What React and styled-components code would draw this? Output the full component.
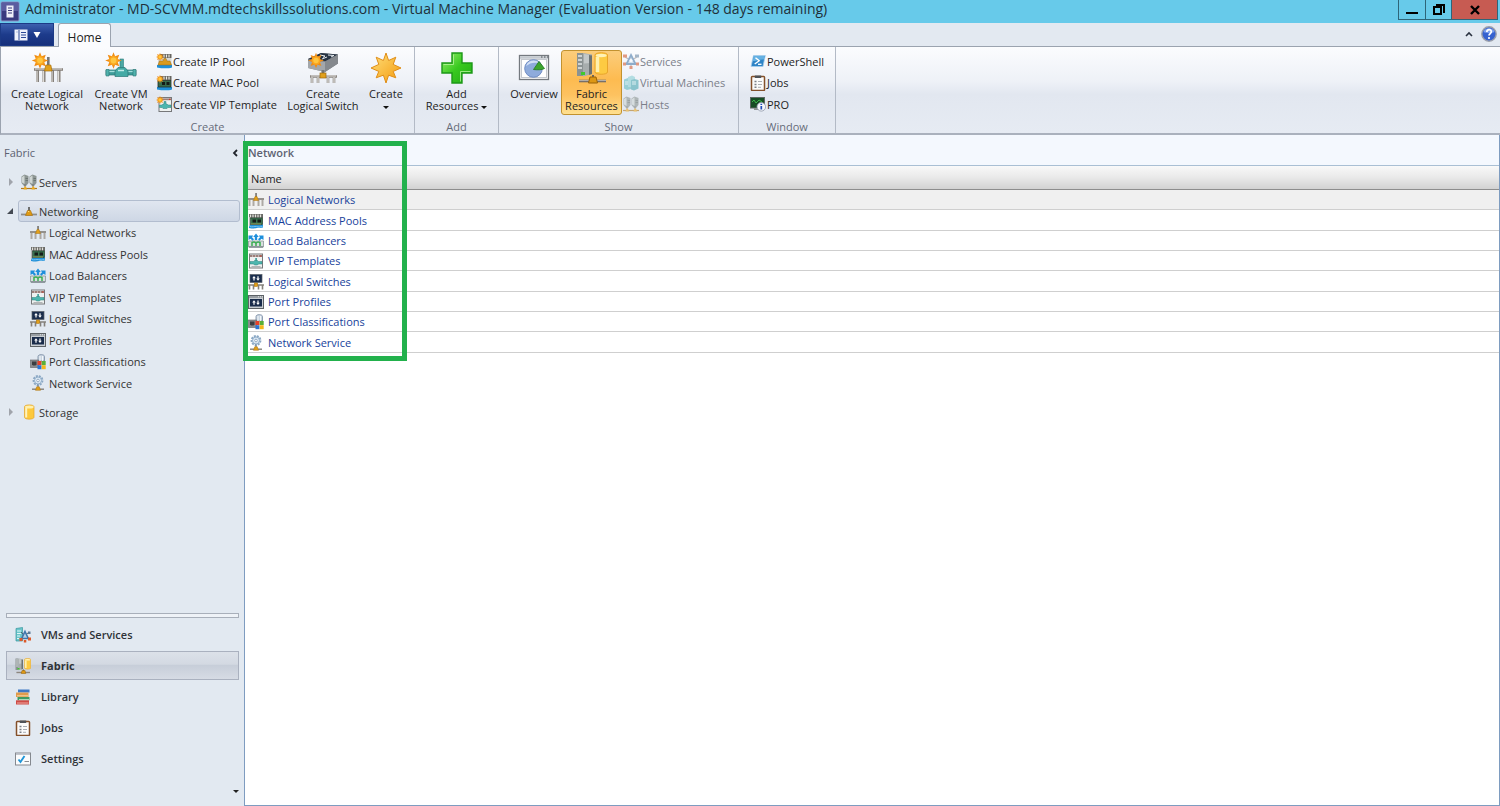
import React from "react";
import styled, { createGlobalStyle } from "styled-components";

const GlobalStyle = createGlobalStyle`
  * {
    box-sizing: border-box;
  }
  body {
    margin: 0;
    font-family: "Open Sans", "Noto Sans", sans-serif;
    font-size: 11px;
    color: #1e1e1e;
    background-color: #ffffff;
  }
  button {
    font: inherit;
    color: inherit;
    background: none;
    border: none;
    padding: 0;
    margin: 0;
  }
  ul {
    list-style: none;
    margin: 0;
    padding: 0;
  }
  svg {
    display: block;
    flex-shrink: 0;
  }
`;

/* ---------- small icons, 16 x 16 ---------- */

const Svg16 = ({ children }) => (
  <svg width="16" height="16" viewBox="0 0 16 16" aria-hidden="true">
    {children}
  </svg>
);

const SunShape = ({ x = 4, y = 4, s = 1 }) => (
  <g transform={`translate(${x} ${y}) scale(${s})`}>
    <path
      d="M0 -5.2 L1 -2.6 L3.6 -3.6 L2.6 -1 L5.2 0 L2.6 1 L3.6 3.6 L1 2.6 L0 5.2 L-1 2.6 L-3.6 3.6 L-2.6 1 L-5.2 0 L-2.6 -1 L-3.6 -3.6 L-1 -2.6 Z"
      fill="#f08c14"
    />
    <circle r="2.9" fill="#f9a51f" />
    <circle r="1.8" fill="#ffc640" />
  </g>
);

const NetworkingIcon = () => (
  <Svg16>
    <path d="M0 11.5h16" stroke="#7d7d7d" strokeWidth="1.6" />
    <path d="M0 11h16" stroke="#b9b9b9" strokeWidth=".6" />
    <rect x="7" y="4" width="2" height="4" fill="#6f6f6f" />
    <path d="M4.5 12.5L6.5 7.5h3l2 5z" fill="#e09a12" stroke="#a56a08" strokeWidth=".6" />
    <path d="M7 8.5h1.2" stroke="#ffdf83" />
  </Svg16>
);

const LogicalNetworkIcon = () => (
  <Svg16>
    <path d="M0 7h16" stroke="#8c8782" strokeWidth="1.8" />
    <path d="M1.5 8v6M5.500 8v6M10.500 8v6M14.500 8v6" stroke="#918c87" strokeWidth="1.7" />
    <path d="M1.2 8v6M5.2 8v6M10.2 8v6M14.2 8v6" stroke="#d8d4cf" strokeWidth=".6" />
    <rect x="7.3" y="1" width="1.5" height="4" fill="#6d6a65" />
    <path d="M5.5 8.500L7 4.500h2l1.500 4z" fill="#e2a01a" stroke="#a8700f" strokeWidth=".5" />
  </Svg16>
);

const MacPoolIcon = () => (
  <Svg16>
    <path d="M1 1h14v4H1z" fill="#6a6a67" />
    <path d="M2.5 1.500v3M5 1.500v3M7.500 1.500v3M10 1.500v3M12.500 1.500v3" stroke="#e3e3dc" strokeWidth="1.200" />
    <path d="M1 11.500h14v3c-2 .8-4 0-6 .6s-5 .5-8-.2z" fill="#1f8fd8" />
    <path d="M1.500 13.500c3 .8 5-.3 7 .1s4 .5 6-.2" stroke="#8fd2f7" fill="none" strokeWidth=".8" />
    <rect x="2.500" y="5" width="12" height="6.500" fill="#3a7350" stroke="#243c2c" strokeWidth=".7" />
    <rect x="4.500" y="6.500" width="3.500" height="3" fill="#151d19" />
    <rect x="9.500" y="6.500" width="3.500" height="3" fill="#151d19" />
    <path d="M3.500 11h10" stroke="#e7c35c" strokeDasharray="1 1" />
    <path d="M1.500 4v9" stroke="#b6b8b8" strokeWidth="1.200" />
  </Svg16>
);

const LoadBalancerIcon = () => (
  <Svg16>
    <path d="M.5 8h15v6h-15z" fill="#d9dedf" stroke="#8b9699" strokeWidth=".8" />
    <path d="M1 14h14" stroke="#5e6b70" />
    <path d="M8 .5l2.800 3.500H9.200v3H6.800V4H5.200z" fill="#1e8fdc" />
    <path d="M.5 2.500h4.700L4 4.200l2 2-1.500 1.500-2-2L.5 7z" fill="#1e8fdc" />
    <path d="M15.500 2.500h-4.700L12 4.200l-2 2 1.500 1.500 2-2 2 1.300z" fill="#1e8fdc" />
    <path d="M4 13V9.500c2.500-1 3.500 0 4 1 .5-1 1.500-2 4-1V13M8 10v3" fill="none" stroke="#3cae53" strokeWidth="1.500" />
  </Svg16>
);

const VipIcon = () => (
  <Svg16>
    <rect x="1.500" y="1" width="13" height="14" fill="#eef1f0" stroke="#77787a" />
    <path d="M2 3h12" stroke="#9c7f7a" strokeWidth="2" />
    <path d="M4 3h1M7 3h1M10 3h1" stroke="#fff" strokeWidth=".8" />
    <path d="M12 3h1.5" stroke="#c7402e" strokeWidth="1.2" />
    <path d="M7.300 5h1.600v3.500H7.300z" fill="#3b9d97" />
    <path d="M2 8.500h3.500l1-1h3l1 1H14V11h-3.500l-1 1h-3l-1-1H2z" fill="#4db6ae" stroke="#2f827d" strokeWidth=".5" />
    <path d="M3.500 13.500h9" stroke="#b3b5b6" />
  </Svg16>
);

const SwitchArrows = ({ y = 0 }) => (
  <g transform={`translate(0 ${y})`} fill="#fff">
    <path d="M6 1.500l1.800 2.200H6.600V6H5.400V3.700H4.200z" />
    <path d="M10 6.200L8.200 4h1.200V1.700h1.200V4h1.200z" />
  </g>
);

const LogicalSwitchIcon = () => (
  <Svg16>
    <rect x="2" y=".5" width="12" height="8" fill="#1b2e4d" stroke="#5a6068" strokeWidth=".7" />
    <SwitchArrows y={0.6} />
    <path d="M0 11h16M1.500 11v4.500M5.500 11v4.500M10.500 11v4.500M14.500 11v4.500" stroke="#85817b" strokeWidth="1.600" fill="none" />
    <rect x="6.300" y="9" width="3.400" height="3.500" fill="#e2a01a" stroke="#a8700f" strokeWidth=".5" />
  </Svg16>
);

const PortProfileIcon = () => (
  <Svg16>
    <rect x=".5" y="1.500" width="15" height="13" fill="#c9ced3" stroke="#5d6266" />
    <path d="M1 3h14" stroke="#8e9499" strokeWidth="1.600" />
    <path d="M10 2.800h1M12 2.800h1M14 2.800h1" stroke="#fff" strokeWidth=".8" />
    <rect x="2" y="5" width="12" height="7.500" fill="#1a2c4b" />
    <SwitchArrows y={4.8} />
  </Svg16>
);

const PortClassIcon = () => (
  <Svg16>
    <path d="M8 7V2.500C8 0 14.500 0 14.500 2.500V7z" fill="#c9d5e2" stroke="#7688a0" strokeWidth=".8" />
    <path d="M10 2v5M12.500 2v5" stroke="#fff" strokeWidth=".8" />
    <rect x=".5" y="6" width="8" height="7.500" fill="#8a8c8e" stroke="#606266" strokeWidth=".6" />
    <path d="M2 7.500h4.500v3l-1 1h-2.500l-1-1z" fill="#3b3d41" />
    <rect x="7.500" y="7" width="4" height="4" fill="#e5412a" />
    <rect x="11.700" y="7" width="4" height="4" fill="#5aaf36" />
    <rect x="7.500" y="11.200" width="4" height="4" fill="#2c73d2" />
    <rect x="11.700" y="11.200" width="4" height="4" fill="#f4b81c" />
  </Svg16>
);

const NetworkServiceIcon = () => (
  <Svg16>
    <circle cx="8" cy="5.500" r="4.400" fill="#e6eff8" stroke="#8ba8c4" strokeWidth="2" strokeDasharray="2 1" />
    <circle cx="8" cy="5.500" r="3.500" fill="#dbe8f4" stroke="#84a3c2" strokeWidth=".8" />
    <circle cx="8" cy="5.500" r="1.300" fill="#fff" stroke="#7894b0" strokeWidth=".7" />
    <path d="M8 9.500v3" stroke="#7b8ea2" strokeWidth="1.300" />
    <path d="M2 14.200h12" stroke="#85817b" strokeWidth="1.400" />
    <path d="M5.500 15.300l1.200-3.500h2.600l1.200 3.500z" fill="#e2a01a" stroke="#a8700f" strokeWidth=".5" />
  </Svg16>
);

const ServersIcon = () => (
  <Svg16>
    <path d="M.5 2.500L3.500.5l4 1.500v7l-2.500 3H3L.5 9z" fill="#8d9693" />
    <path d="M8.500 2.500l3-2 4 1.500v7L13 12h-2L8.500 9z" fill="#8d9693" />
    <path d="M1 3l2.500-1.500V10L1 8.500zM9 3l2.500-1.500V10L9 8.500z" fill="#cfd6d4" />
    <path d="M4.500 4.500H7M4.500 6.500H7M12.500 4.500H15M12.500 6.500H15" stroke="#6d7674" />
    <path d="M4 10v3M12 10v3" stroke="#777" />
    <path d="M0 14.500h16" stroke="#b27a1d" strokeWidth="1.200" />
    <path d="M2.500 15.500l1-3H5l1 3zM10.500 15.500l1-3H13l1 3z" fill="#edaa1e" />
  </Svg16>
);

const StorageIcon = () => (
  <Svg16>
    <path d="M3.500 2.700C3.500.3 13 .3 13 2.700v10.600c0 2.500-9.500 2.500-9.500 0z" fill="#fdc93c" stroke="#e4a32a" strokeWidth=".7" />
    <path d="M5.200 4v9.500" stroke="#fff3bd" strokeWidth="2" />
    <ellipse cx="8.300" cy="2.900" rx="4.300" ry="1.500" fill="#fff0ae" />
  </Svg16>
);

const ServicesIcon = () => (
  <Svg16>
    <path d="M2 4l12 7M14 4L2 11M8 10v5" stroke="#9b8f8d" strokeWidth="1.200" />
    <path d="M8 2l4.500 9h-9z" fill="#bfd3e4" stroke="#4c7cab" strokeWidth="1.800" />
    <rect x="0" y="1.500" width="4" height="3" fill="#d35c31" />
    <rect x="12" y="1.500" width="4" height="3" fill="#6e8ba6" />
    <rect x="0" y="9.500" width="3" height="3" fill="#d35c31" />
    <rect x="13" y="9.500" width="3" height="3" fill="#d35c31" />
    <rect x="6.500" y="13" width="3" height="3" fill="#d35c31" />
    <circle cx="8" cy="7.500" r="1.500" fill="#fff" />
  </Svg16>
);

const VmsIcon = () => (
  <Svg16>
    <path d="M1 4.500L5 3l3 1.500v9.500l-4 1-3-1.500z" fill="#63bcc2" />
    <path d="M5 2L9 .5 12 2v10H5z" fill="#8bd0d4" />
    <path d="M8 5l3.500-1L15.500 5v8.500L11 15.500l-3-1z" fill="#4da9b4" />
    <path d="M2 7h3M2 9h3M9 7h4M9 9h4" stroke="#d7f1f1" />
  </Svg16>
);

const VmServicesIcon = () => (
  <Svg16>
    <path d="M1 1.500L7.500.5v13.500H1z" fill="#6bc6cb" stroke="#38969f" strokeWidth=".7" />
    <path d="M2 4h4M2 6.500h4M2 9h3M2 11.500h2" stroke="#e2f7f7" />
    <path d="M6 5l8 8M14 5l-9 8" stroke="#58616d" />
    <path d="M10 4.500l3.300 7H6.700z" fill="#b9cfe3" stroke="#3f76aa" strokeWidth="1.600" />
    <rect x="13" y="4.500" width="2.500" height="2.500" fill="#597b9b" />
    <rect x="4.500" y="11" width="3" height="3" fill="#dc5a2b" />
    <rect x="13" y="10.500" width="3" height="3" fill="#dc5a2b" />
    <rect x="8.800" y="13" width="2.500" height="2.500" fill="#dc5a2b" />
  </Svg16>
);

const FabricIcon = ({ size = 16 }) => (
  <svg width={size} height={size} viewBox="0 0 32 32" aria-hidden="true">
    <path d="M1 1h6v23H1z" fill="#8b9393" />
    <path d="M7 1l9 1.500V22l-9 2.500z" fill="#a7adad" />
    <path d="M8 2l7 1v8l-7 .5z" fill="#c3c8c8" />
    <path d="M2 4h4M2 8h4M2 12h4M2 16h4" stroke="#e4e8e8" strokeWidth="1.600" />
    <path d="M13 3l3 .5V22l-3 1z" fill="#6c7374" />
    <rect x="5" y="20" width="4" height="3" fill="#3fc92c" />
    <path d="M19 3c0-3 12.500-3 12.500 0v17c0 3-12.500 3-12.500 0z" fill="#fdca42" stroke="#e9a52a" />
    <path d="M21.500 5v15" stroke="#fff0ae" strokeWidth="3.500" />
    <ellipse cx="25.200" cy="3.500" rx="5.500" ry="1.700" fill="#fff2b8" />
    <path d="M17 23v4" stroke="#666" strokeWidth="2" />
    <path d="M3 29h27" stroke="#77706a" strokeWidth="2.600" />
    <path d="M3 28.500h27" stroke="#c5beb4" strokeWidth=".8" />
    <path d="M12.500 31l1.500-6h6l1.500 6z" fill="#dd9714" stroke="#9a6207" />
  </svg>
);

const LibraryIcon = () => (
  <Svg16>
    <path d="M3 .5h11.500v3H3z" fill="#3f78c4" />
    <path d="M1 3.500h12.500V8H1z" fill="#e09b4c" />
    <path d="M2 6.800h11" stroke="#fbe3bd" strokeWidth=".8" />
    <path d="M2.500 8h12v3.200h-12z" fill="#3e9a63" />
    <path d="M4 10.500h10" stroke="#c8ebd1" strokeWidth=".8" />
    <path d="M1 11.300h13V15.500H1z" fill="#cf4b45" />
    <path d="M2 14h11.500" stroke="#f6c3bc" strokeWidth=".8" />
  </Svg16>
);

const JobsIcon = () => (
  <Svg16>
    <rect x="1.500" y="1.500" width="13" height="14" rx=".8" fill="#fbfbfb" stroke="#84502a" strokeWidth="1.500" />
    <path d="M4.800.5h6.400V3H4.800z" fill="#4f5358" />
    <path d="M4.500 6.500h2M4.500 9.500h2M4.500 12.300h2" stroke="#7b8087" strokeWidth="1.400" />
    <path d="M8 6.500h4M8 9.500h4M8 12.300h3" stroke="#a9adb3" />
  </Svg16>
);

const SettingsIcon = () => (
  <Svg16>
    <rect x=".5" y="2" width="15" height="12" fill="#fbfcfd" stroke="#85898f" />
    <path d="M1 3h14" stroke="#b4bac2" strokeWidth="1.600" />
    <path d="M3.500 8.500l2 2.500 4-6" fill="none" stroke="#1f95d8" strokeWidth="1.900" />
    <path d="M9.500 10.500H14" stroke="#888c92" />
  </Svg16>
);

const PowerShellIcon = () => (
  <Svg16>
    <path d="M3.500 2.500h11.800l-2.300 11H1z" fill="#2d83c6" stroke="#a8cfec" strokeWidth=".8" />
    <path d="M3.800 3h10.900l-.8 3.500C9 6 6 8.500 2.500 8z" fill="#64b0e2" />
    <path d="M5.500 4.800l3.700 3L4.700 11" fill="none" stroke="#fff" strokeWidth="1.400" />
    <path d="M8 11.300h3.500" stroke="#fff" strokeWidth="1.300" />
  </Svg16>
);

const ProIcon = () => (
  <Svg16>
    <rect x=".5" y="1.500" width="14" height="10.500" fill="#174d23" stroke="#5e6663" />
    <path d="M2 6l2-2 2 3 3-3 3 2" fill="none" stroke="#3eb34a" />
    <path d="M4 14h5v-2H4z" fill="#8e9492" />
    <circle cx="11.300" cy="10.800" r="4.300" fill="#f4f6fb" stroke="#8e97a8" strokeWidth=".8" />
    <path d="M11.300 10v3.500M11.300 7.700V9" stroke="#1d49b7" strokeWidth="1.700" />
  </Svg16>
);

const NewIpIcon = () => (
  <Svg16>
    <path d="M4 1h11.500v4H3z" fill="#66645f" />
    <path d="M8 1.500v3M10.500 1.500v3M13 1.500v3" stroke="#ece9e0" strokeWidth="1.200" />
    <path d="M2 5h13.500v7H2z" fill="#d7d8d5" />
    <path d="M1 12h15v2.500c-4 1.300-10 1-15 0z" fill="#1f8fd8" />
    <path d="M2 12l1.500-4H7L8 5.500h2L11 8h3l1.500 4z" fill="#d99a1f" stroke="#9c6b0c" strokeWidth=".5" />
    <SunShape x={4} y={4} s={0.8} />
  </Svg16>
);

const NewMacIcon = () => (
  <Svg16>
    <path d="M4 1h11.500v4H4z" fill="#66645f" />
    <path d="M8 1.500v3M10.500 1.500v3M13 1.500v3" stroke="#ece9e0" strokeWidth="1.200" />
    <path d="M1 12h15v2.500c-4 1.300-10 1-15 0z" fill="#1f8fd8" />
    <rect x="2" y="5.500" width="13" height="6.500" fill="#376b4c" stroke="#202e26" strokeWidth=".8" />
    <path d="M6 7h3v3H6zM10.500 7h3v3h-3z" fill="#141b17" />
    <SunShape x={4} y={4} s={0.8} />
  </Svg16>
);

const NewVipIcon = () => (
  <Svg16>
    <rect x="3" y="1.500" width="12.500" height="14" fill="#eef1f0" stroke="#77787a" />
    <path d="M3.500 3.300H15" stroke="#9c7f7a" strokeWidth="1.800" />
    <path d="M13 3.300h1.5" stroke="#c7402e" strokeWidth="1.200" />
    <path d="M3.500 9H6l1-1h1V5.500h2V8h1l1 1h3v2.500h-3l-1 1H7l-1-1H3.500z" fill="#4db6ae" stroke="#2f827d" strokeWidth=".5" />
    <SunShape x={4} y={4} s={0.8} />
  </Svg16>
);

/* ---------- large icons, 32 x 32 ---------- */

const Svg32 = ({ children }) => (
  <svg width="32" height="32" viewBox="0 0 32 32" aria-hidden="true">
    {children}
  </svg>
);

const BigLogicalNetwork = () => (
  <Svg32>
    <path d="M3 17.500h29" stroke="#88837e" strokeWidth="2.600" />
    <path d="M6.500 18v12M13 18v12M21.500 18v12M28 18v12" stroke="#85807b" strokeWidth="3" />
    <path d="M4 17h27M6 19v11M12.500 19v11M21 19v11M27.500 19v11" stroke="#dedbd7" strokeWidth="1.200" />
    <rect x="16" y="5" width="2.600" height="9" fill="#777" />
    <path d="M13.500 19l1.300-6h5l1.300 6z" fill="#e2a01a" stroke="#a8700f" strokeWidth=".7" />
    <SunShape x={9} y={8.5} s={1.6} />
  </Svg32>
);

const BigVmNetwork = () => (
  <Svg32>
    <rect x="15" y="7" width="3.500" height="12" fill="#4aa7a3" stroke="#2c7d7c" strokeWidth=".6" />
    <path d="M1 18h30v5H1z" fill="#3e9d9a" stroke="#2b7776" strokeWidth=".7" />
    <path d="M2 19.500h28" stroke="#a2dedb" strokeWidth="1.300" />
    <path d="M1 17.500h3v6.500H1zM28 17.500h3v6.500h-3z" fill="#50b2ad" stroke="#2b7776" strokeWidth=".6" />
    <path d="M10 24.500V19l3-3.500h7l3 3.500v5.500z" fill="#44aaa5" stroke="#2b7776" strokeWidth=".7" />
    <path d="M13 18.500h6" stroke="#c1ebe8" strokeWidth="1.500" />
    <SunShape x={8.5} y={8.5} s={1.6} />
  </Svg32>
);

const BigLogicalSwitch = () => (
  <Svg32>
    <path d="M1 7L14 1l17 1.500v9L18 20 1 16z" fill="#7c8085" />
    <path d="M1 7L14 1l17 1.500L18 9.500z" fill="#283444" />
    <path d="M13 3l5 1-2 1.500M21 3l6 .5-3 1.500M15 7l5-2" stroke="#e9eef2" fill="none" />
    <path d="M18 9.500l13-7v9L18 20z" fill="#85898e" />
    <path d="M1 9v7l17 4V9.500" fill="#a3a7ab" />
    <path d="M16 18v5" stroke="#767676" strokeWidth="3" />
    <path d="M3 24.500h27M5 24v7M11 24v7M21 24v7M27 24v7" stroke="#89847f" strokeWidth="2.600" fill="none" />
    <path d="M4 24h25M5 25v6M11 25v6M21 25v6M27 25v6" stroke="#e2e0dd" strokeWidth="1.200" />
    <rect x="13" y="21" width="6" height="5" fill="#e0a01c" stroke="#9d690d" strokeWidth=".7" />
    <SunShape x={9} y={8.5} s={1.5} />
  </Svg32>
);

const BigSun = () => (
  <Svg32>
    <defs>
      <linearGradient id="sunFill" x1="0" y1="0" x2="1" y2="1">
        <stop offset="0" stopColor="#ffe07c" />
        <stop offset="1" stopColor="#f49a0c" />
      </linearGradient>
    </defs>
    <path
      d="M16 1l2.600 7.500 7.200-3.300-2.600 7.200L31 16l-7.800 3.400 2.600 6.400-7.200-2.600L16 31l-2.600-7.800-7.200 2.600 2.600-6.400L1 16l7.800-3.600-2.600-7.200 7.200 3.300z"
      fill="url(#sunFill)"
      stroke="#e08e17"
    />
  </Svg32>
);

const BigPlus = () => (
  <Svg32>
    <defs>
      <linearGradient id="plusFill" x1="0" y1="0" x2="1" y2="1">
        <stop offset="0" stopColor="#9af06e" />
        <stop offset=".5" stopColor="#38c91f" />
        <stop offset="1" stopColor="#23a916" />
      </linearGradient>
    </defs>
    <path d="M11 1h10v10h10v10H21v10H11V21H1V11h10z" fill="url(#plusFill)" stroke="#1c9817" strokeWidth="1.400" />
    <path d="M12.500 2.500v10h-10M19.500 29.500v-10h10" fill="none" stroke="#b6f59b" strokeWidth=".8" />
  </Svg32>
);

const BigOverview = () => (
  <Svg32>
    <rect x="1.500" y="3.500" width="29" height="24" fill="#fcfcfd" stroke="#74797f" strokeWidth="1.300" />
    <rect x="3.500" y="7.500" width="25" height="18" fill="#ffffff" stroke="#c4c8ce" />
    <path d="M2 5.500h28" stroke="#c4c9cf" strokeWidth="2.600" />
    <path d="M23 5h1.500M26 5h1.500M29 5h1" stroke="#4b4f54" strokeWidth="1.200" />
    <circle cx="15.500" cy="16.500" r="8.800" fill="#8eabdc" stroke="#6f8cc4" />
    <path d="M8 14c2-6 10-7 13-3-6-1-9 0-13 3z" fill="#d2e0f6" />
    <path d="M15.500 17.500L21 9.500l5.500 7c-2 1.500-7.500 1.500-11 1z" fill="#3da52e" stroke="#217a1c" strokeWidth=".8" />
  </Svg32>
);

/* ---------- title bar ---------- */

const Window = styled.div`
  min-height: 100vh;
  display: flex;
  flex-direction: column;
  background-color: #e3e9f1;
`;

const TitleBar = styled.header`
  height: 23px;
  display: flex;
  justify-content: space-between;
  align-items: flex-start;
  background-color: #67caea;
`;

const TitleLeft = styled.div`
  display: flex;
  gap: 5px;
`;

const Title = styled.h1`
  margin: 0;
  font-size: 14px;
  line-height: 18px;
  font-weight: 400;
  color: #1f3039;
  white-space: nowrap;
`;

const WindowButtons = styled.div`
  display: flex;
  height: 20px;
  margin-right: 2px;
  border: 1px solid #2e6579;
  border-top: none;
`;

const WindowButton = styled.button`
  width: ${({ $wide }) => ($wide ? "46px" : "26px")};
  display: flex;
  align-items: center;
  justify-content: center;
  background-color: ${({ $close }) => ($close ? "#c75b52" : "transparent")};
  & + & {
    border-left: 1px solid #2e6579;
  }
`;

/* ---------- ribbon ---------- */

const TabRow = styled.div`
  height: 24px;
  display: flex;
  align-items: flex-end;
  background-color: #e3e9f1;
  border-bottom: 1px solid #9ba3af;
`;

const FileButton = styled.button`
  width: 54px;
  height: 23px;
  display: flex;
  align-items: center;
  justify-content: center;
  gap: 5px;
  border: 1px solid #1c3a86;
  background: linear-gradient(#3c5fae, #1d3b8b 50%, #16307c);
`;

const Tab = styled.button`
  width: 53px;
  height: 24px;
  margin-left: 4px;
  margin-bottom: -1px;
  padding-top: 3px;
  border: 1px solid #9ba3af;
  border-bottom: none;
  border-radius: 3px 3px 0 0;
  background-color: #fbfcfe;
  color: #222222;
  font-size: 12px;
`;

const TabRight = styled.div`
  margin-left: auto;
  height: 21px;
  padding-right: 3px;
  display: flex;
  align-items: flex-start;
  gap: 8px;
`;

const TabAction = styled.button`
  height: 18px;
  display: flex;
  align-items: center;
`;

const Ribbon = styled.div`
  height: 88px;
  display: flex;
  border-bottom: 2px solid #aab1bd;
  border-left: 1px solid #9ba3af;
  background: linear-gradient(#fbfcfe, #eef1f7 40%, #e2e7f0 55%, #e6ebf3);
`;

const Group = styled.section`
  display: flex;
  flex-direction: column;
  justify-content: space-between;
  width: ${({ $width }) => $width};
  padding-top: 3px;
  border-right: 1px solid #b3bac6;
`;

const GroupBody = styled.div`
  display: flex;
  justify-content: ${({ $center }) => ($center ? "center" : "flex-start")};
  gap: ${({ $gap }) => $gap || "3px"};
  padding-left: ${({ $left }) => $left || "0"};
`;

const GroupLabel = styled.h2`
  margin: 0;
  font-size: 11px;
  line-height: 12px;
  font-weight: 400;
  color: #666c7a;
  text-align: center;
`;

const BigButton = styled.button`
  width: ${({ $width }) => $width};
  height: 65px;
  display: flex;
  flex-direction: column;
  align-items: center;
  padding-top: 1px;
  border: 1px solid ${({ $active }) => ($active ? "#c2922f" : "transparent")};
  border-radius: 3px;
  background: ${({ $active }) =>
    $active ? "linear-gradient(#fbcd7c, #fdbb50 45%, #fdc260 70%, #ffe08f)" : "none"};
  font-size: 11px;
  line-height: 12px;
  text-align: center;
  white-space: nowrap;
`;

const BigLabel = styled.span`
  margin-top: 4px;
`;

const SmallColumn = styled.div`
  display: flex;
  flex-direction: column;
  padding-right: ${({ $right }) => $right || "0"};
`;

const SmallButton = styled.button`
  height: 22px;
  display: flex;
  align-items: center;
  gap: 1px;
  font-size: 11px;
  white-space: nowrap;
  color: ${({ disabled }) => (disabled ? "#7b7f8a" : "#1e1e1e")};
  svg {
    opacity: ${({ disabled }) => (disabled ? 0.6 : 1)};
  }
  &:nth-child(even) {
    height: 21px;
  }
`;

const Caret = styled.span`
  display: inline-block;
  vertical-align: middle;
  border: 3px solid transparent;
  border-top-color: ${({ $color }) => $color || "#111111"};
  border-bottom: none;
`;

/* ---------- body ---------- */

const Body = styled.div`
  flex: 1;
  display: flex;
`;

const Sidebar = styled.aside`
  width: 244px;
  display: flex;
  flex-direction: column;
  justify-content: space-between;
  background-color: #e2e9f1;
`;

const SidebarHeader = styled.div`
  height: 36px;
  display: flex;
  align-items: center;
  justify-content: space-between;
  padding: 0 6px 0 4px;
`;

const PaneTitle = styled.h2`
  margin: 0;
  font-size: 11px;
  line-height: 16px;
  font-weight: ${({ $strong }) => ($strong ? 600 : 400)};
  color: #5d6272;
`;

const TreeRow = styled.div`
  height: 22px;
  display: flex;
  align-items: center;
  margin-bottom: ${({ $after }) => $after || "0"};
  padding-right: 4px;
`;

const Toggle = styled.button`
  width: 18px;
  height: 22px;
  display: flex;
  align-items: center;
  padding-left: 7px;
`;

const TreeItem = styled.button`
  flex: 1;
  height: 22px;
  display: flex;
  align-items: center;
  gap: 2px;
  padding-left: 2px;
  border: 1px solid ${({ $selected }) => ($selected ? "#b2bdcf" : "transparent")};
  border-radius: 3px;
  background: ${({ $selected }) => ($selected ? "linear-gradient(#e0e6f0, #ced7e5)" : "none")};
  color: #333333;
`;

const SubTree = styled.ul`
  margin-bottom: 7px;
`;

const SubItem = styled.li`
  height: 21px;
  display: flex;
  padding-left: 30px;
  &:nth-child(even) {
    height: 22px;
  }
`;

const SubButton = styled.button`
  display: flex;
  align-items: center;
  gap: 3px;
  color: #333333;
`;

const NavArea = styled.nav`
  padding: 0 5px 0 6px;
`;

const Splitter = styled.div`
  height: 5px;
  border: 1px solid #a8afba;
  background-color: #eef2f7;
`;

const NavButton = styled.button`
  width: 100%;
  height: 29px;
  margin-top: 2px;
  padding-left: 8px;
  display: flex;
  align-items: center;
  gap: 10px;
  border: 1px solid ${({ $active }) => ($active ? "#aab1bf" : "transparent")};
  background: ${({ $active }) =>
    $active ? "linear-gradient(#dce1e9, #d3d9e2 45%, #c7ced9 50%, #d6dbe4)" : "none"};
  color: #2f3237;
  font-weight: ${({ $active }) => ($active ? 700 : 600)};
`;

const NavFooter = styled.div`
  height: 33px;
  display: flex;
  align-items: center;
  justify-content: flex-end;
`;

const Main = styled.main`
  position: relative;
  flex: 1;
  border: 1px solid #7e9cc0;
  border-top: none;
  background-color: #ffffff;
`;

const MainHeader = styled.div`
  height: 31px;
  display: flex;
  align-items: center;
  padding: 5px 3px 0;
  border-bottom: 1px solid #a9bfd4;
  background-color: #f4f8fe;
`;

const Table = styled.table`
  width: 100%;
  border-collapse: separate;
  border-spacing: 0;
`;

const HeadCell = styled.th`
  height: 24px;
  padding: 2px 6px 0;
  text-align: left;
  font-size: 11px;
  font-weight: 400;
  color: #222222;
  border-bottom: 1px solid #8d8d8d;
  background: linear-gradient(#f9f9f9, #e9e9e9 50%, #d2d2d2);
`;

const Row = styled.tr`
  height: 20px;
  background-color: ${({ $selected }) => ($selected ? "#f0f0f0" : "#ffffff")};
  &:nth-child(3n + 2) {
    height: 21px;
  }
`;

const Cell = styled.td`
  padding: 1px 3px 0;
  border-bottom: 1px solid #cfcfcf;
`;

const RowLink = styled.a`
  display: flex;
  align-items: center;
  gap: 4px;
  line-height: 16px;
  color: #173f9b;
  text-decoration: none;
`;

const Callout = styled.div`
  position: absolute;
  top: 6px;
  left: -2px;
  width: 164px;
  height: 220px;
  border: 5px solid #22b14c;
  pointer-events: none;
`;

const networkItems = [
  { name: "Logical Networks", icon: LogicalNetworkIcon },
  { name: "MAC Address Pools", icon: MacPoolIcon },
  { name: "Load Balancers", icon: LoadBalancerIcon },
  { name: "VIP Templates", icon: VipIcon },
  { name: "Logical Switches", icon: LogicalSwitchIcon },
  { name: "Port Profiles", icon: PortProfileIcon },
  { name: "Port Classifications", icon: PortClassIcon },
  { name: "Network Service", icon: NetworkServiceIcon },
];

const workspaces = [
  { name: "VMs and Services", icon: VmServicesIcon },
  { name: "Fabric", icon: FabricIcon, active: true },
  { name: "Library", icon: LibraryIcon },
  { name: "Jobs", icon: JobsIcon },
  { name: "Settings", icon: SettingsIcon },
];

const TopBar = () => (
  <TitleBar>
    <TitleLeft>
      <svg width="20" height="22" viewBox="0 0 20 22" aria-hidden="true">
        <rect x="1" y="2" width="18" height="19" rx="1" fill="#39397f" stroke="#8c94c9" />
        <rect x="2" y="3" width="16" height="8" fill="#5a5ca0" />
        <rect x="6.500" y="5.500" width="7" height="12" fill="#eeeef8" />
        <path d="M8 8h4M8 10.500h4M8 13h4" stroke="#3a3a7c" strokeWidth="1.200" />
      </svg>
      <Title>
        Administrator - MD-SCVMM.mdtechskillssolutions.com - Virtual Machine Manager (Evaluation
        Version - 148 days remaining)
      </Title>
    </TitleLeft>
    <WindowButtons>
      <WindowButton aria-label="Minimize">
        <svg width="14" height="14" viewBox="0 0 14 14">
          <path d="M1 10h12" stroke="#000" strokeWidth="2" />
        </svg>
      </WindowButton>
      <WindowButton aria-label="Restore">
        <svg width="14" height="14" viewBox="0 0 14 14">
          <path d="M4 2h8v8" fill="none" stroke="#000" strokeWidth="2" />
          <rect x="2" y="4" width="7" height="7" fill="none" stroke="#000" strokeWidth="2" />
        </svg>
      </WindowButton>
      <WindowButton aria-label="Close" $wide $close>
        <svg width="12" height="12" viewBox="0 0 12 12">
          <path d="M2 2l8 8M10 2l-8 8" stroke="#000" strokeWidth="2.400" />
        </svg>
      </WindowButton>
    </WindowButtons>
  </TitleBar>
);

const Tabs = () => (
  <TabRow>
    <FileButton aria-label="File">
      <svg width="14" height="12" viewBox="0 0 14 12" aria-hidden="true">
        <rect x=".5" y=".5" width="13" height="11" fill="#eef2fb" />
        <path d="M5 1v10" stroke="#2a4895" />
        <path d="M7 3.500h5M7 6h5M7 8.500h5" stroke="#2a4895" />
        <path d="M2 3h2" stroke="#aebce0" />
      </svg>
      <svg width="8" height="6" viewBox="0 0 8 6" aria-hidden="true">
        <path d="M.5 0h7L4 6z" fill="#fff" />
      </svg>
    </FileButton>
    <Tab>Home</Tab>
    <TabRight>
      <TabAction aria-label="Collapse ribbon">
        <svg width="8" height="6" viewBox="0 0 8 6">
          <path d="M1 5l3-3 3 3" fill="none" stroke="#2a3240" strokeWidth="1.600" />
        </svg>
      </TabAction>
      <TabAction aria-label="Help">
        <svg width="16" height="16" viewBox="0 0 16 16">
          <circle cx="8" cy="8" r="7.200" fill="#3561cf" stroke="#9a9fab" strokeWidth="1.400" />
          <path d="M2.500 6c1-5 10-5 11 0-3 1.500-8 1.500-11 0z" fill="#7ca0ee" />
          <path d="M5.800 6c0-3.200 4.600-3 4.500-.2C10.300 7.500 8 7.600 8 9.500" fill="none" stroke="#fff" strokeWidth="1.700" />
          <circle cx="8" cy="12" r="1.100" fill="#fff" />
        </svg>
      </TabAction>
    </TabRight>
  </TabRow>
);

const RibbonBar = () => (
  <Ribbon>
    <Group $width="414px">
      <GroupBody $left="7px" $gap="4px">
        <BigButton $width="78px">
          <BigLogicalNetwork />
          <BigLabel>
            Create Logical
            <br />
            Network
          </BigLabel>
        </BigButton>
        <BigButton $width="62px">
          <BigVmNetwork />
          <BigLabel>
            Create VM
            <br />
            Network
          </BigLabel>
        </BigButton>
        <SmallColumn $right="3px">
          <SmallButton>
            <NewIpIcon />
            Create IP Pool
          </SmallButton>
          <SmallButton>
            <NewMacIcon />
            Create MAC Pool
          </SmallButton>
          <SmallButton>
            <NewVipIcon />
            Create VIP Template
          </SmallButton>
        </SmallColumn>
        <BigButton $width="78px">
          <BigLogicalSwitch />
          <BigLabel>
            Create
            <br />
            Logical Switch
          </BigLabel>
        </BigButton>
        <BigButton $width="40px">
          <BigSun />
          <BigLabel>
            Create
            <br />
            <Caret />
          </BigLabel>
        </BigButton>
      </GroupBody>
      <GroupLabel>Create</GroupLabel>
    </Group>
    <Group $width="84px">
      <GroupBody $center>
        <BigButton $width="68px">
          <BigPlus />
          <BigLabel>
            Add
            <br />
            Resources <Caret />
          </BigLabel>
        </BigButton>
      </GroupBody>
      <GroupLabel>Add</GroupLabel>
    </Group>
    <Group $width="240px">
      <GroupBody $left="9px" $gap="1px">
        <BigButton $width="52px">
          <BigOverview />
          <BigLabel>Overview</BigLabel>
        </BigButton>
        <BigButton $width="61px" $active>
          <FabricIcon size={32} />
          <BigLabel>
            Fabric
            <br />
            Resources
          </BigLabel>
        </BigButton>
        <SmallColumn>
          <SmallButton disabled>
            <ServicesIcon />
            Services
          </SmallButton>
          <SmallButton disabled>
            <VmsIcon />
            Virtual Machines
          </SmallButton>
          <SmallButton disabled>
            <ServersIcon />
            Hosts
          </SmallButton>
        </SmallColumn>
      </GroupBody>
      <GroupLabel>Show</GroupLabel>
    </Group>
    <Group $width="97px">
      <GroupBody $left="11px">
        <SmallColumn>
          <SmallButton>
            <PowerShellIcon />
            PowerShell
          </SmallButton>
          <SmallButton>
            <JobsIcon />
            Jobs
          </SmallButton>
          <SmallButton>
            <ProIcon />
            PRO
          </SmallButton>
        </SmallColumn>
      </GroupBody>
      <GroupLabel>Window</GroupLabel>
    </Group>
  </Ribbon>
);

const ClosedArrow = () => (
  <svg width="7" height="8" viewBox="0 0 7 8" aria-hidden="true">
    <path d="M2 0v8l4-4z" fill="#a0a4ab" />
  </svg>
);

const OpenArrow = () => (
  <svg width="7" height="7" viewBox="0 0 7 7" aria-hidden="true">
    <path d="M6 0v6H0z" fill="#444a52" />
  </svg>
);

const SidePane = () => (
  <Sidebar>
    <div>
      <SidebarHeader>
        <PaneTitle>Fabric</PaneTitle>
        <button aria-label="Collapse pane">
          <svg width="6" height="8" viewBox="0 0 6 8">
            <path d="M5 1L2 4l3 3" fill="none" stroke="#20242c" strokeWidth="1.800" />
          </svg>
        </button>
      </SidebarHeader>
      <TreeRow $after="7px">
        <Toggle aria-label="Expand Servers">
          <ClosedArrow />
        </Toggle>
        <TreeItem>
          <ServersIcon />
          Servers
        </TreeItem>
      </TreeRow>
      <TreeRow>
        <Toggle aria-label="Collapse Networking">
          <OpenArrow />
        </Toggle>
        <TreeItem $selected>
          <NetworkingIcon />
          Networking
        </TreeItem>
      </TreeRow>
      <SubTree>
        {networkItems.map(({ name, icon: Icon }) => (
          <SubItem key={name}>
            <SubButton>
              <Icon />
              {name}
            </SubButton>
          </SubItem>
        ))}
      </SubTree>
      <TreeRow>
        <Toggle aria-label="Expand Storage">
          <ClosedArrow />
        </Toggle>
        <TreeItem>
          <StorageIcon />
          Storage
        </TreeItem>
      </TreeRow>
    </div>
    <NavArea>
      <Splitter />
      {workspaces.map(({ name, icon: Icon, active }) => (
        <NavButton key={name} $active={active}>
          <Icon />
          {name}
        </NavButton>
      ))}
      <NavFooter>
        <button aria-label="Configure buttons">
          <Caret $color="#222222" />
        </button>
      </NavFooter>
    </NavArea>
  </Sidebar>
);

const App = () => {
  return (
    <Window>
      <GlobalStyle />
      <TopBar />
      <Tabs />
      <RibbonBar />
      <Body>
        <SidePane />
        <Main>
          <MainHeader>
            <PaneTitle $strong>Network</PaneTitle>
          </MainHeader>
          <Table>
            <thead>
              <tr>
                <HeadCell>Name</HeadCell>
              </tr>
            </thead>
            <tbody>
              {networkItems.map(({ name, icon: Icon }, index) => (
                <Row key={name} $selected={index === 0}>
                  <Cell>
                    <RowLink href="#">
                      <Icon />
                      {name}
                    </RowLink>
                  </Cell>
                </Row>
              ))}
            </tbody>
          </Table>
          <Callout />
        </Main>
      </Body>
    </Window>
  );
};

export default App;
